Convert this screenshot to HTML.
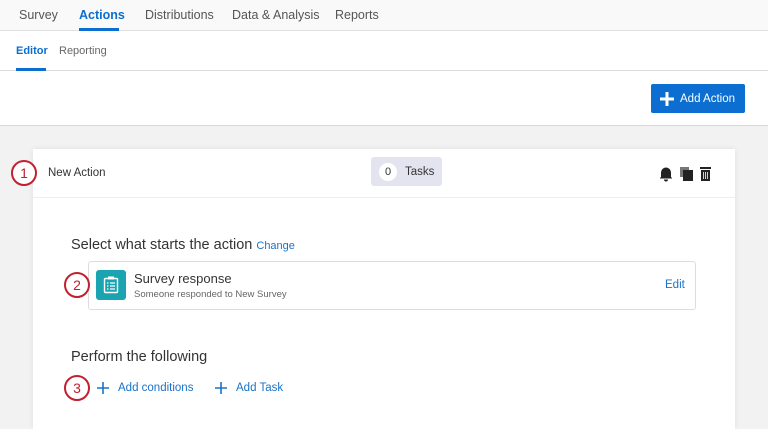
<!DOCTYPE html><html><head><style>
*{margin:0;padding:0;box-sizing:border-box}
body{width:768px;height:422px;overflow:hidden;background:#f2f2f2;font-family:"Liberation Sans",sans-serif;position:relative;color:#333}
.a{position:absolute}
.nav{left:0;top:0;width:768px;height:31px;background:#f9f9f9;border-bottom:1px solid #e2e2e2}
.nav span{position:absolute;top:8px;font-size:12.5px;color:#555}
.sub{left:0;top:31px;width:768px;height:40px;background:#fff;border-bottom:1px solid #ddd}
.tb{left:0;top:71px;width:768px;height:55px;background:#fff;border-bottom:1px solid #d8d8d8}
.card{left:33px;top:149px;width:702px;height:280px;background:#fff;box-shadow:0 0 6px rgba(0,0,0,.08)}
.circ{width:26px;height:26px;border:2px solid #c2202e;border-radius:50%;color:#c2202e;font-size:14px;text-align:center;line-height:22px;background:#fff}
.blue{color:#1a73c8}
</style></head><body>
<div class="a nav">
<span style="left:19px">Survey</span>
<span style="left:79px;color:#0b6ed0;font-weight:bold">Actions</span>
<span style="left:145px">Distributions</span>
<span style="left:232px">Data &amp; Analysis</span>
<span style="left:335px">Reports</span>
<div class="a" style="left:79px;top:28px;width:40px;height:3px;background:#0b6ed0"></div>
</div>
<div class="a sub">
<span class="a" style="left:16px;top:14px;font-size:11px;font-weight:bold;color:#0b6ed0">Editor</span>
<span class="a" style="left:59px;top:14px;font-size:11px;color:#666">Reporting</span>
<div class="a" style="left:16px;top:37px;width:30px;height:3px;background:#0b6ed0"></div>
</div>
<div class="a tb">
<div class="a" style="left:651px;top:13px;width:94px;height:29px;background:#0b6ed0;border-radius:2px;color:#fff;font-size:11.5px">
<svg class="a" style="left:9px;top:8px" width="14" height="14"><path d="M7 0v14M0 7h14" stroke="#fff" stroke-width="3"/></svg>
<span class="a" style="left:29px;top:9px">Add Action</span></div>
</div>
<div class="a card">
<div class="a" style="left:0;top:48px;width:702px;height:1px;background:#eee"></div>
<span class="a" style="left:15px;top:18px;font-size:11.5px">New Action</span>
<div class="a" style="left:338px;top:8px;width:71px;height:29px;background:#e3e4f0;border-radius:3px">
<div class="a" style="left:8px;top:6px;width:18px;height:18px;background:#fff;border-radius:50%;font-size:11px;text-align:center;line-height:18px">0</div>
<span class="a" style="left:34px;top:9px;font-size:11.5px">Tasks</span></div>
<svg class="a" style="left:626px;top:17px" width="52" height="16">
<path d="M1 12h12M2.5 12V6.5a4.5 4.5 0 0 1 9 0V12M5.5 13.5a1.5 1.5 0 0 0 3 0" fill="#222" stroke="#222"/>
<rect x="21" y="1" width="9" height="10" fill="#777"/><rect x="24" y="4" width="10" height="11" fill="#222"/>
<rect x="41" y="1" width="11" height="2" fill="#222"/><path d="M42 4h9v11h-9z" fill="#222"/><path d="M44.5 6v7M46.5 6v7M48.5 6v7" stroke="#fff" stroke-width=".8"/>
</svg>
<span class="a" style="left:38px;top:88px;font-size:14.5px">Select what starts the action <span class="blue" style="font-size:11px">Change</span></span>
<div class="a" style="left:55px;top:112px;width:608px;height:49px;border:1px solid #ddd;border-radius:3px">
<div class="a" style="left:7px;top:8px;width:30px;height:30px;background:#1aa3b0;border-radius:3px">
<svg class="a" style="left:7px;top:6px" width="16" height="18"><rect x="1.5" y="2.5" width="13" height="14" rx="1" fill="none" stroke="#fff" stroke-width="1.4"/><rect x="5" y="0.5" width="6" height="3" fill="#fff"/><path d="M4 7h1.5M7 7h5M4 10h1.5M7 10h5M4 13h1.5M7 13h5" stroke="#fff" stroke-width="1.2"/></svg></div>
<span class="a" style="left:45px;top:9px;font-size:13px">Survey response</span>
<span class="a" style="left:45px;top:27px;font-size:9.5px;color:#666">Someone responded to New Survey</span>
<span class="a blue" style="left:576px;top:17px;font-size:11.5px">Edit</span>
</div>
<span class="a" style="left:38px;top:200px;font-size:14.5px">Perform the following</span>
<svg class="a" style="left:64px;top:233px" width="12" height="12"><path d="M6 0v12M0 6h12" stroke="#1a73c8" stroke-width="1.6"/></svg>
<span class="a blue" style="left:85px;top:233px;font-size:11.5px">Add conditions</span>
<svg class="a" style="left:182px;top:233px" width="12" height="12"><path d="M6 0v12M0 6h12" stroke="#1a73c8" stroke-width="1.6"/></svg>
<span class="a blue" style="left:203px;top:233px;font-size:11.5px">Add Task</span>
</div>
<div class="a circ" style="left:11px;top:160px">1</div>
<div class="a circ" style="left:64px;top:272px">2</div>
<div class="a circ" style="left:64px;top:375px">3</div>
</body></html>
